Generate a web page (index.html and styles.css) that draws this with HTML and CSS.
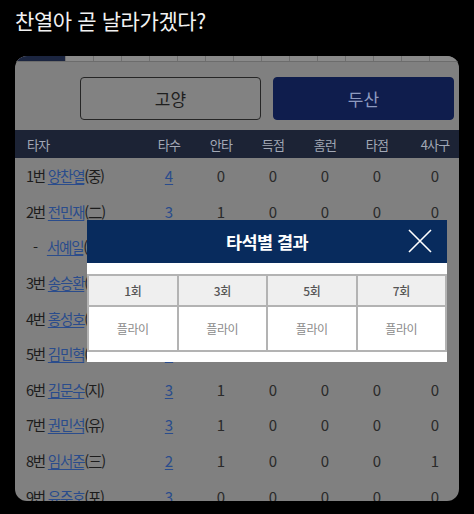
FILE: index.html
```html
<!DOCTYPE html>
<html lang="ko">
<head>
<meta charset="utf-8">
<title>타석별 결과</title>
<link rel="stylesheet" href="styles.css">
</head>
<body>
<div class="page">
  <h1 class="title">찬열아 곧 날라가겠다?</h1>
  <div class="card">
    <div class="tabs">
      <span class="tab active"></span>
      <span class="tab"></span><span class="tab"></span><span class="tab"></span><span class="tab"></span>
      <span class="tab"></span><span class="tab"></span><span class="tab"></span><span class="tab"></span>
      <span class="tab"></span><span class="tab"></span><span class="tab"></span><span class="tab"></span>
      <span class="tab"></span><span class="tab"></span>
    </div>
    <div class="teams">
      <div class="team">고양</div>
      <div class="team on">두산</div>
    </div>
    <div class="row head">
      <span class="name">타자</span><span>타수</span><span>안타</span><span>득점</span><span>홈런</span><span>타점</span><span class="last">4사구</span>
    </div>
    <div class="row"><span class="name">1번 <a class="link">양찬열</a>(중)</span><span><a class="link">4</a></span><span>0</span><span>0</span><span>0</span><span>0</span><span class="last">0</span></div>
    <div class="row"><span class="name">2번 <a class="link">전민재</a>(二)</span><span><a class="link">3</a></span><span>1</span><span>0</span><span>0</span><span>0</span><span class="last">0</span></div>
    <div class="row"><span class="name"><span class="dash">-</span> <a class="link">서예일</a>(二)</span><span><a class="link">1</a></span><span>0</span><span>0</span><span>0</span><span>0</span><span class="last">0</span></div>
    <div class="row"><span class="name">3번 <a class="link">송승환</a>(一)</span><span><a class="link">4</a></span><span>1</span><span>0</span><span>0</span><span>0</span><span class="last">0</span></div>
    <div class="row"><span class="name">4번 <a class="link">홍성호</a>(좌)</span><span><a class="link">4</a></span><span>0</span><span>0</span><span>0</span><span>0</span><span class="last">0</span></div>
    <div class="row"><span class="name">5번 <a class="link">김민혁</a>(우)</span><span><a class="link">3</a></span><span>1</span><span>0</span><span>0</span><span>0</span><span class="last">1</span></div>
    <div class="row"><span class="name">6번 <a class="link">김문수</a>(지)</span><span><a class="link">3</a></span><span>1</span><span>0</span><span>0</span><span>0</span><span class="last">0</span></div>
    <div class="row"><span class="name">7번 <a class="link">권민석</a>(유)</span><span><a class="link">3</a></span><span>1</span><span>0</span><span>0</span><span>0</span><span class="last">0</span></div>
    <div class="row"><span class="name">8번 <a class="link">임서준</a>(三)</span><span><a class="link">2</a></span><span>1</span><span>0</span><span>0</span><span>0</span><span class="last">1</span></div>
    <div class="row"><span class="name">9번 <a class="link">유주호</a>(포)</span><span><a class="link">3</a></span><span>0</span><span>0</span><span>0</span><span>0</span><span class="last">0</span></div>

    <div class="modal">
      <div class="modal-head">
        <span class="modal-title">타석별 결과</span>
        <svg class="close" width="24" height="24" viewBox="0 0 24 24" aria-hidden="true">
          <path d="M1 1 L23 23 M23 1 L1 23" stroke="#ffffff" stroke-width="1.6" fill="none"/>
        </svg>
      </div>
      <div class="modal-body">
        <table class="results">
          <tr class="inning"><th>1회</th><th>3회</th><th>5회</th><th>7회</th></tr>
          <tr class="result"><td>플라이</td><td>플라이</td><td>플라이</td><td>플라이</td></tr>
        </table>
      </div>
    </div>
  </div>
</div>
</body>
</html>
```

FILE: styles.css
```css
html, body {
  margin: 0;
  padding: 0;
  background: #000;
}
body {
  width: 474px;
  height: 514px;
  overflow: hidden;
  font-family: "Noto Sans CJK KR", "Noto Sans", sans-serif;
}
.page {
  padding-top: 8px;
}
.title {
  margin: 0 0 24px 15px;
  font-size: 21px;
  line-height: 24px;
  font-weight: 400;
  letter-spacing: -0.4px;
  color: #f2f2f2;
}
.card {
  position: relative;
  margin: 0 15px;
  height: 445px;
  border-radius: 12px;
  overflow: hidden;
  background: #808080;
}
.tabs {
  display: flex;
  height: 5px;
  border-bottom: 1px solid #6c6c6c;
  background: #8a8a8a;
}
.tab {
  width: 28px;
  flex: none;
  border-left: 1px solid #707070;
  box-sizing: border-box;
}
.tab.active {
  width: 50px;
  border-left: 0;
  background: #1b2540;
}
.teams {
  display: flex;
  gap: 12px;
  padding: 15px 5px 10px 65px;
}
.team {
  flex: 1;
  height: 43px;
  box-sizing: border-box;
  border: 1.5px solid #262626;
  border-radius: 4px;
  display: flex;
  align-items: center;
  justify-content: center;
  font-size: 17px;
  color: #1e1e1e;
  background: #828282;
}
.team.on {
  border-color: #0f1d4d;
  background: #0f1d4d;
  color: #8e9ac0;
}
.row {
  display: grid;
  grid-template-columns: 128px repeat(5, 52px) 56px;
  align-items: center;
  height: 35.6px;
  font-size: 15px;
  color: #2a2a2a;
}
.row > span {
  text-align: center;
}
.row > .name {
  text-align: left;
  padding-left: 11px;
  color: #1c1c1c;
  white-space: nowrap;
  font-size: 14.5px;
  letter-spacing: -1.2px;
}
.row > .last {
  padding-left: 8px;
}
.dash {
  display: inline-block;
  width: 18px;
  text-align: center;
}
.row.head {
  height: 28px;
  background: #1c2335;
  color: #a2a8b6;
  font-size: 13px;
  letter-spacing: -0.8px;
}
.row.head > .name {
  color: #a2a8b6;
  padding-left: 12px;
  font-size: 13px;
  letter-spacing: -0.8px;
}
.link {
  color: #2a4c8c;
  text-decoration: underline;
  text-underline-offset: 2px;
}
.modal {
  position: absolute;
  left: 72px;
  top: 164px;
  width: 360px;
  background: #fff;
}
.modal-head {
  position: relative;
  height: 43px;
  background: #082b5d;
  display: flex;
  align-items: center;
  justify-content: center;
}
.modal-title {
  color: #fff;
  font-size: 17.5px;
  font-weight: 700;
  letter-spacing: -0.6px;
}
.close {
  position: absolute;
  right: 15px;
  top: 9px;
}
.modal-body {
  padding: 11px 0 10px;
}
.results {
  width: 100%;
  border-collapse: collapse;
  table-layout: fixed;
}
.results th, .results td {
  border: 2px solid #b3b3b3;
  text-align: center;
  padding: 0;
  font-size: 12px;
  letter-spacing: -0.4px;
}
.inning th {
  height: 29px;
  background: #efefef;
  color: #555;
  font-weight: 500;
}
.result td {
  height: 43px;
  background: #fff;
  color: #8a8a8a;
  font-weight: 400;
}
```
